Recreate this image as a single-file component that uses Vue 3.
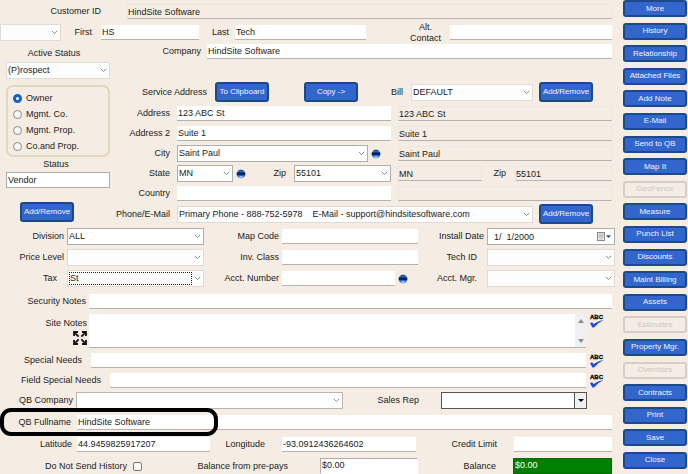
<script setup>
import { ref } from 'vue'

const actions = [
  { name: 'More' },
  { name: 'History' },
  { name: 'Relationship' },
  { name: 'Attached Files' },
  { name: 'Add Note' },
  { name: 'E-Mail' },
  { name: 'Send to QB' },
  { name: 'Map It' },
  { name: 'GeoFence', disabled: true },
  { name: 'Measure' },
  { name: 'Punch List' },
  { name: 'Discounts' },
  { name: 'Maint Billing' },
  { name: 'Assets' },
  { name: 'Estimates', disabled: true },
  { name: 'Property Mgr.' },
  { name: 'Overrides', disabled: true },
  { name: 'Contracts' },
  { name: 'Print' },
  { name: 'Save' },
  { name: 'Close' },
]

const roles = ['Owner', 'Mgmt. Co.', 'Mgmt. Prop.', 'Co.and Prop.']
const role = ref('Owner')
const doNotSend = ref(false)
const phoneLine = 'Primary Phone - 888-752-5978\u00a0\u00a0\u00a0\u00a0E-Mail - support@hindsitesoftware.com'
</script>

<template>
  <div class="page">
    <svg class="defs" aria-hidden="true">
      <defs>
        <symbol id="chevron" viewBox="0 0 7 5">
          <path d="M0.8 0.8 L3.5 3.6 L6.2 0.8" fill="none" stroke="#8c8c8c" stroke-width="1" />
        </symbol>
        <symbol id="globe" viewBox="0 0 10 10">
          <circle cx="5" cy="5" r="4.3" fill="#2467c4" />
          <path d="M2 2 Q5 -0.6 8 2 Z" fill="#1b4f9e" />
          <path d="M0.8 3.4 H9.2 V6 H0.8 Z" fill="#0a2459" />
          <path d="M3 7 H7 L6.6 9 H3.4 Z" fill="#8fbcf0" />
        </symbol>
        <symbol id="spell" viewBox="0 0 16 14">
          <text x="1" y="5.4" font-family="Liberation Sans, sans-serif" font-size="6" font-weight="700" fill="#000" stroke="#000" stroke-width="0.3">ABC</text>
          <path d="M1 9.2 L3 8.2 L4.6 10 Q8.5 7 14.8 5.8 Q8.8 8.8 5 13.4 L3.4 13.4 Z" fill="#2448e0" />
        </symbol>
      </defs>
    </svg>

    <form class="form" @submit.prevent>
      <div class="row r-customer">
        <label for="customer-id">Customer ID</label>
        <input id="customer-id" class="field readonly" value="HindSite Software" readonly />
      </div>

      <div class="row r-name">
        <span class="combo">
          <select aria-label="Title"><option></option></select>
          <svg class="chev"><use href="#chevron" /></svg>
        </span>
        <label for="first">First</label>
        <input id="first" class="field" value="HS" />
        <label for="last" class="pad-s">Last</label>
        <input id="last" class="field" value="Tech" />
        <label for="alt" class="stacked">Alt.<br />Contact</label>
        <input id="alt" class="field" />
      </div>

      <div class="row upper">
        <div class="left">
          <label for="active" class="active-label">Active Status</label>
          <span class="combo">
            <select id="active"><option>(P)rospect</option></select>
            <svg class="chev"><use href="#chevron" /></svg>
          </span>
          <fieldset class="roles">
            <label v-for="r in roles" :key="r" class="role">
              <input v-model="role" type="radio" name="role" :value="r" />{{ r }}
            </label>
          </fieldset>
          <label for="status" class="status-label">Status</label>
          <input id="status" class="field boxed" value="Vendor" />
          <button type="button" class="btn left-btn">Add/Remove</button>
        </div>

        <div class="right">
          <div class="r-company">
            <label for="company">Company</label>
            <input id="company" class="field" value="HindSite Software" />
          </div>

          <div class="r-service">
            <span class="label">Service Address</span>
            <button type="button" class="btn">To Clipboard</button>
            <button type="button" class="btn end">Copy -&gt;</button>
            <label for="bill">Bill</label>
            <span class="combo">
              <select id="bill"><option>DEFAULT</option></select>
              <svg class="chev"><use href="#chevron" /></svg>
            </span>
            <button type="button" class="btn end">Add/Remove</button>
          </div>

          <div class="address">
            <label for="address">Address</label>
            <input id="address" class="field" value="123 ABC St" />
            <input class="field readonly" aria-label="Billing address" value="123 ABC St" readonly />

            <label for="address2">Address 2</label>
            <input id="address2" class="field" value="Suite 1" />
            <input class="field readonly" aria-label="Billing address 2" value="Suite 1" readonly />

            <label for="city">City</label>
            <div class="cell">
              <span class="combo framed grow">
                <select id="city"><option>Saint Paul</option></select>
                <svg class="chev"><use href="#chevron" /></svg>
              </span>
              <svg class="globe city-globe"><use href="#globe" /></svg>
            </div>
            <input class="field readonly" aria-label="Billing city" value="Saint Paul" readonly />

            <label for="state">State</label>
            <div class="cell">
              <span class="combo framed state">
                <select id="state"><option>MN</option></select>
                <svg class="chev"><use href="#chevron" /></svg>
              </span>
              <svg class="globe"><use href="#globe" /></svg>
              <label for="zip" class="zip-label">Zip</label>
              <span class="combo framed grow">
                <select id="zip"><option>55101</option></select>
                <svg class="chev"><use href="#chevron" /></svg>
              </span>
            </div>
            <div class="cell">
              <input class="field readonly bill-state" aria-label="Billing state" value="MN" readonly />
              <label for="bill-zip" class="bill-zip-label">Zip</label>
              <input id="bill-zip" class="field readonly grow" value="55101" readonly />
            </div>

            <label for="country">Country</label>
            <input id="country" class="field" />
            <input class="field readonly" aria-label="Billing country" readonly />
          </div>

          <div class="r-phone">
            <label for="phone">Phone/E-Mail</label>
            <span class="combo">
              <select id="phone"><option>{{ phoneLine }}</option></select>
              <svg class="chev"><use href="#chevron" /></svg>
            </span>
            <button type="button" class="btn end">Add/Remove</button>
          </div>
        </div>
      </div>

      <div class="details">
        <label for="division">Division</label>
        <span class="combo framed">
          <select id="division"><option>ALL</option></select>
          <svg class="chev"><use href="#chevron" /></svg>
        </span>
        <label for="map-code">Map Code</label>
        <input id="map-code" class="field" />
        <label for="install">Install Date</label>
        <span class="combo framed date">
          <input id="install" value="1/  1/2000" />
          <svg class="calendar" viewBox="0 0 14 9">
            <rect x="0.5" y="0.5" width="7" height="8" fill="#f4f4f4" stroke="#8a8a8a" />
            <path d="M1 3 H7 M1 5 H7 M3 1 V8 M5 1 V8" stroke="#a5a5a5" stroke-width="0.7" />
            <path d="M9 3.2 H14 L11.5 6 Z" fill="#2f4f7a" />
          </svg>
        </span>

        <label for="price">Price Level</label>
        <span class="combo">
          <select id="price"><option></option></select>
          <svg class="chev"><use href="#chevron" /></svg>
        </span>
        <label for="inv">Inv. Class</label>
        <input id="inv" class="field" />
        <label for="tech" class="pad-l">Tech ID</label>
        <span class="combo">
          <select id="tech"><option></option></select>
          <svg class="chev"><use href="#chevron" /></svg>
        </span>

        <label for="tax" class="pad-l">Tax</label>
        <span class="combo focus">
          <select id="tax"><option>St</option></select>
          <svg class="chev"><use href="#chevron" /></svg>
        </span>
        <label for="acct">Acct. Number</label>
        <div class="cell">
          <input id="acct" class="field grow" />
          <svg class="globe acct-globe"><use href="#globe" /></svg>
        </div>
        <label for="mgr" class="pad-l">Acct. Mgr.</label>
        <span class="combo">
          <select id="mgr"><option></option></select>
          <svg class="chev"><use href="#chevron" /></svg>
        </span>
      </div>

      <div class="row r-security">
        <label for="security">Security Notes</label>
        <input id="security" class="field" />
      </div>

      <div class="row r-site">
        <div class="site-label">
          <label for="site">Site Notes</label>
          <svg class="expand" viewBox="0 0 14 14">
            <g fill="none" stroke="#111" stroke-width="1.8">
              <path d="M1 5 V1 H5 M1.4 1.4 L5.6 5.6" />
              <path d="M9 1 H13 V5 M12.6 1.4 L8.4 5.6" />
              <path d="M1 9 V13 H5 M1.4 12.6 L5.6 8.4" />
              <path d="M9 13 H13 V9 M12.6 12.6 L8.4 8.4" />
            </g>
          </svg>
        </div>
        <div class="notes">
          <textarea id="site"></textarea>
          <div class="scroll">
            <svg viewBox="0 0 6 4"><path d="M3 0 L6 4 H0 Z" fill="#8e8e8e" /></svg>
            <svg viewBox="0 0 6 4"><path d="M0 0 H6 L3 4 Z" fill="#8e8e8e" /></svg>
          </div>
        </div>
        <svg class="spell"><use href="#spell" /></svg>
      </div>

      <div class="row r-special">
        <label for="special">Special Needs</label>
        <input id="special" class="field" />
        <svg class="spell"><use href="#spell" /></svg>
      </div>

      <div class="row r-field-special">
        <label for="field-special">Field Special Needs</label>
        <input id="field-special" class="field" />
        <svg class="spell"><use href="#spell" /></svg>
      </div>

      <div class="row r-qb">
        <label for="qb">QB Company</label>
        <span class="combo thick">
          <select id="qb"><option></option></select>
          <svg class="chev"><use href="#chevron" /></svg>
        </span>
        <label for="rep" class="rep-label">Sales Rep</label>
        <span class="combo classic">
          <select id="rep"><option></option></select>
          <span class="drop"><svg viewBox="0 0 6 3"><path d="M0 0 H6 L3 3 Z" fill="#000" /></svg></span>
        </span>
      </div>

      <div class="row r-fullname">
        <label for="fullname">QB Fullname</label>
        <input id="fullname" class="field" value="HindSite Software" />
        <div class="marker"></div>
      </div>

      <div class="row r-geo">
        <label for="lat">Latitude</label>
        <input id="lat" class="field" value="44.9459825917207" />
        <label for="lng" class="pad-xl">Longitude</label>
        <input id="lng" class="field" value="-93.0912436264602" />
        <label for="credit" class="pad-xl">Credit Limit</label>
        <input id="credit" class="field" />
      </div>

      <div class="row r-balance">
        <label for="no-history">Do Not Send History</label>
        <input id="no-history" v-model="doNotSend" type="checkbox" class="check" />
        <label for="prepay" class="prepay">Balance from pre-pays</label>
        <input id="prepay" class="field sunken" value="$0.00" />
        <label for="balance" class="pad-xl">Balance</label>
        <input id="balance" class="field sunken green" value="$0.00" />
      </div>
    </form>

    <nav class="side">
      <button v-for="a in actions" :key="a.name" type="button" class="btn" :disabled="a.disabled">{{ a.name }}</button>
    </nav>
  </div>
</template>

<style>
body {
  background: #f5ece3;
}
</style>

<style scoped>
* {
  box-sizing: border-box;
}
.page {
  display: flex;
  font-family: "Liberation Sans", Arial, sans-serif;
  font-size: 9px;
  line-height: 11px;
  color: #222;
  background: #f5ece3;
}
.defs {
  position: absolute;
  width: 0;
  height: 0;
}
.form {
  flex: 1;
  min-width: 0;
  padding: 4px 8px 0 0;
}
.row {
  display: grid;
  align-items: center;
  margin-right: 3px;
}
label,
.label {
  text-align: right;
  white-space: nowrap;
}
input,
select,
textarea,
button {
  font: inherit;
  color: inherit;
  margin: 0;
  min-width: 0;
}
.field {
  width: 100%;
  height: 15px;
  padding: 0 1px;
  border: 0;
  border-bottom: 1px solid #b5b3b1;
  border-radius: 0;
  background: #fff;
}
.readonly {
  background: #f5ece3;
  border: 1px solid #ece7e2;
  border-bottom-color: #b5b3b1;
  padding: 0;
}
.boxed {
  height: 16px;
  border: 1px solid #b0aeac;
}
.combo {
  position: relative;
  display: grid;
  align-items: center;
  min-width: 0;
  height: 17px;
  border: 1px solid #dedbd8;
  background: #fdfdfd;
}
.combo select {
  width: 100%;
  height: 15px;
  padding: 0 14px 0 1px;
  border: 0;
  background: transparent;
  appearance: none;
}
.framed {
  border-color: #b0aeac;
  background: #fff;
}
.thick {
  border: 1px solid #b9b5b1;
  background: #fff;
}
.chev {
  position: absolute;
  right: 2px;
  width: 7px;
  height: 5px;
  pointer-events: none;
}
.focus select {
  width: calc(100% - 12px);
  height: 13px;
  margin-left: 1px;
  padding-left: 0;
  border: 1px dotted #222;
}
.cell {
  display: flex;
  align-items: center;
  min-width: 0;
}
.cell .field {
  width: auto;
}
.cell .grow {
  flex: 1 1 0;
}
.globe {
  flex: none;
  width: 10px;
  height: 10px;
  margin: 0 0 0 3px;
}
.btn {
  width: 54px;
  height: 20px;
  padding: 0;
  border: 2px solid #1b4a8a;
  border-radius: 3px;
  background: #3366cc;
  color: #f2f5ff;
  font-size: 8px;
  line-height: 10px;
  text-align: center;
  white-space: nowrap;
}
.btn:disabled {
  border-color: #d3ceca;
  background: #f5ece3;
  color: #cbc7c3;
}
.end {
  justify-self: end;
}

.r-customer {
  grid-template-columns: 127px minmax(0, 1fr);
}
.r-customer label {
  padding-right: 26px;
}
.r-name {
  grid-template-columns: 61px 40px minmax(0, 98fr) 36px minmax(0, 131fr) 84px minmax(0, 162fr);
  grid-template-rows: 17px;
  margin-top: 5px;
}
.r-name label {
  padding-right: 9px;
}
.r-name .pad-s {
  padding-right: 6px;
}
.stacked {
  justify-self: end;
  text-align: center;
}
.upper {
  grid-template-columns: 110px minmax(0, 1fr);
  align-items: start;
  margin-top: 3px;
}
.left {
  display: flex;
  flex-direction: column;
  padding-left: 6px;
}
.active-label {
  margin: 4px 0 3px;
  padding-right: 8px;
  text-align: center;
}
.roles {
  display: flex;
  flex-direction: column;
  gap: 5px;
  margin: 6px 0 0;
  padding: 6px 5px 3px;
  border: 2px solid #e2d6c0;
  border-radius: 7px;
}
.role {
  display: flex;
  align-items: center;
  gap: 4px;
}
.role input {
  appearance: none;
  width: 9px;
  height: 9px;
  border: 1px solid #8b8886;
  border-radius: 50%;
  background: #f9f6f3;
}
.role input:checked {
  border: 3px solid #1560c8;
  background: #fff;
}
.status-label {
  margin: 2px 0;
  padding-right: 4px;
  text-align: center;
}
.left-btn {
  margin: 14px 0 0 14px;
}
.r-company {
  display: grid;
  grid-template-columns: 97px minmax(0, 1fr);
  align-items: center;
}
.r-company label {
  padding-right: 6px;
}
.r-service {
  display: grid;
  grid-template-columns: 105px 54px 89px 53px minmax(0, 1fr) 60px;
  align-items: center;
  margin-top: 23px;
  padding-right: 19px;
}
.r-service label,
.r-service .label {
  padding-right: 8px;
}
.address {
  display: grid;
  grid-template-columns: 60px minmax(0, 1fr) minmax(0, 1fr);
  grid-auto-rows: 17px;
  gap: 3px 7px;
  align-items: center;
  margin-top: 3px;
}
.city-globe {
  margin-right: 10px;
}
.state {
  width: 56px;
}
.zip-label {
  width: 40px;
  margin-right: 8px;
}
.bill-state {
  flex: 0 1 84px;
}
.bill-zip-label {
  width: 24px;
  margin-right: 9px;
}
.r-phone {
  display: grid;
  grid-template-columns: 67px minmax(0, 1fr) 60px;
  align-items: center;
  margin-top: 2px;
  padding-right: 19px;
}
.r-phone label {
  padding-right: 7px;
}

.details {
  display: grid;
  grid-template-columns: 67px minmax(0, 137fr) 78px minmax(0, 136fr) 69px minmax(0, 128fr);
  grid-auto-rows: 17px;
  row-gap: 4px;
  align-items: center;
  margin-top: 4px;
}
.details label {
  padding-right: 3px;
}
.details .pad-l {
  padding-right: 10px;
}
.acct-globe {
  margin-right: 10px;
}
.date input {
  width: 100%;
  height: 15px;
  padding: 0 18px 0 6px;
  border: 0;
  background: transparent;
  white-space: pre;
}
.calendar {
  position: absolute;
  right: 3px;
  width: 14px;
  height: 9px;
}

.r-security {
  grid-template-columns: 89px minmax(0, 1fr);
  margin-top: 7px;
}
.r-security label {
  padding-right: 3px;
}
.r-site {
  grid-template-columns: 89px minmax(0, 1fr) 26px;
  align-items: start;
  margin-top: 5px;
}
.site-label {
  display: flex;
  flex-direction: column;
  align-items: flex-end;
  gap: 2px;
  padding: 4px 2px 0 0;
}
.expand {
  width: 14px;
  height: 14px;
}
.notes {
  display: flex;
  height: 34px;
  border-bottom: 1px solid #b5b3b1;
  background: #fff;
}
.notes textarea {
  flex: 1;
  padding: 1px;
  border: 0;
  background: transparent;
  resize: none;
}
.scroll {
  display: flex;
  flex-direction: column;
  justify-content: space-between;
  align-items: center;
  width: 11px;
  padding: 5px 0 4px;
  background: #f0f0f0;
}
.scroll svg {
  width: 6px;
  height: 4px;
}
.spell {
  width: 16px;
  height: 14px;
  margin-left: 3px;
}
.r-special {
  grid-template-columns: 91px minmax(0, 1fr) 26px;
  margin-top: 5px;
}
.r-field-special {
  grid-template-columns: 110px minmax(0, 1fr) 26px;
  margin-top: 5px;
}
.r-special label,
.r-field-special label {
  padding-right: 9px;
}
.r-qb {
  grid-template-columns: 76px minmax(0, 267fr) 98px minmax(0, 146fr) 25px;
  margin-top: 4px;
}
.r-qb label {
  padding-right: 3px;
}
.r-qb .rep-label {
  padding-right: 22px;
}
.classic {
  grid-template-columns: 1fr 12px;
  border-color: #555;
  background: #fff;
}
.drop {
  display: flex;
  align-items: center;
  justify-content: center;
  height: 15px;
  border-left: 1px solid #555;
  background: #f3f1ef;
}
.drop svg {
  width: 6px;
  height: 3px;
}
.r-fullname {
  position: relative;
  grid-template-columns: 77px minmax(0, 1fr);
  margin-top: 6px;
}
.r-fullname label {
  padding-right: 6px;
}
.marker {
  position: absolute;
  top: -7px;
  left: 0;
  width: 218px;
  height: 28px;
  border: 4px solid #000;
  border-radius: 11px;
  pointer-events: none;
}
.r-geo {
  grid-template-columns: 77px minmax(0, 133fr) 72px minmax(0, 134fr) 98px minmax(0, 98fr);
  margin-top: 7px;
}
.r-geo label {
  padding-right: 5px;
}
.r-balance {
  grid-template-columns: 133px 9px 178px minmax(0, 98fr) 95px minmax(0, 99fr);
  margin-top: 6px;
}
.r-balance label {
  padding-right: 6px;
}
.r-balance .prepay {
  padding-right: 32px;
}
.r-geo .pad-xl,
.r-balance .pad-xl {
  padding-right: 17px;
}
.check {
  appearance: none;
  width: 9px;
  height: 9px;
  border: 1px solid #777;
  border-radius: 2px;
  background: #fbf8f5;
}
.check:checked {
  background: #1560c8;
}
.sunken {
  height: 16px;
  padding-bottom: 3px;
  border: 1px solid #b0aeac;
  border-right-color: #fff;
  border-bottom-color: #fff;
}
.green {
  border-color: #0a6a0a;
  background: #008000;
  color: #fff;
}

.side {
  display: flex;
  flex-direction: column;
  justify-content: space-between;
  width: 65px;
  padding: 0 0 5px;
}
.side .btn {
  width: 64px;
  height: 17px;
}
</style>
